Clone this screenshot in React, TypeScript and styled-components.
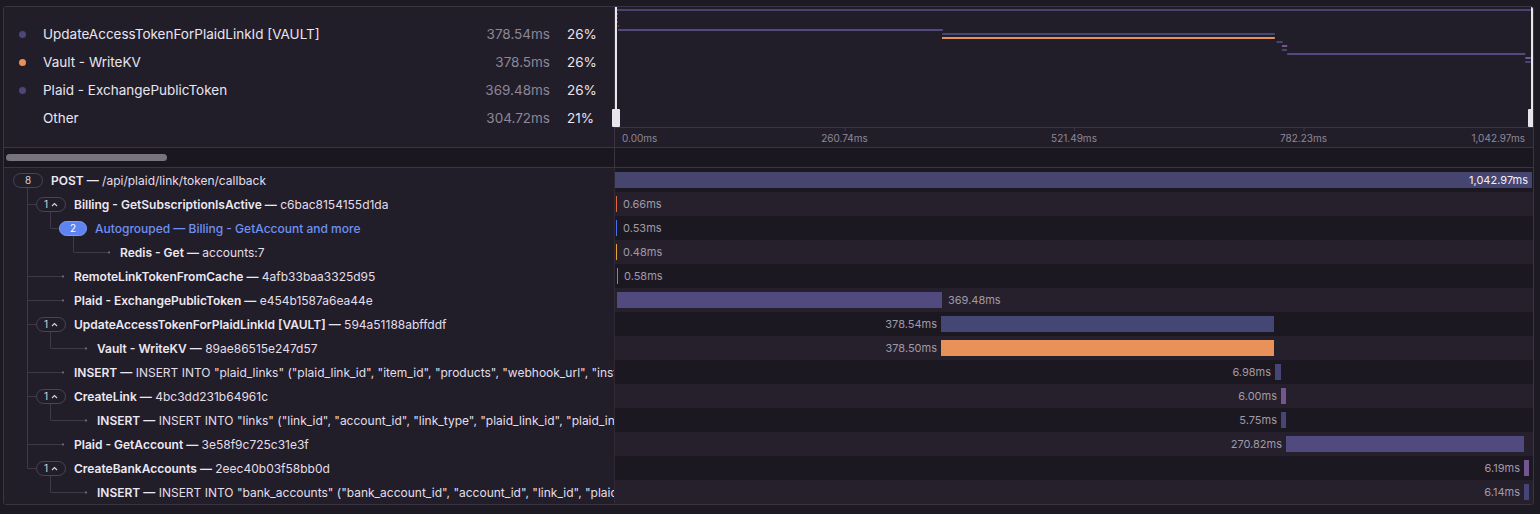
import React from 'react'
import styled, { createGlobalStyle } from 'styled-components'

const TOTAL = 1042.97
const TRACK = 917

const GlobalStyle = createGlobalStyle`
  body {
    margin: 0;
    background: #1d1a23;
    font-family: Inter, "Noto Sans", sans-serif;
    color: #ece8f3;
  }
`

type Span = {
  label: string
  desc?: string
  depth: number
  start: number
  dur: number
  color: string
  count?: number
  chevron?: boolean
  auto?: boolean
}

const spans: Span[] = [
  { label: 'POST', desc: '/api/plaid/link/token/callback', depth: 0, start: 0, dur: 1042.97, color: '#46456f', count: 8 },
  { label: 'Billing - GetSubscriptionIsActive', desc: 'c6bac8154155d1da', depth: 1, start: 1.1, dur: 0.66, color: '#e2673f', count: 1, chevron: true },
  { label: 'Autogrouped — Billing - GetAccount and more', depth: 2, start: 1.1, dur: 0.53, color: '#4d6ff0', count: 2, auto: true },
  { label: 'Redis - Get', desc: 'accounts:7', depth: 3, start: 1.1, dur: 0.48, color: '#e9a23b' },
  { label: 'RemoteLinkTokenFromCache', desc: '4afb33baa3325d95', depth: 1, start: 2.2, dur: 0.58, color: '#e2673f' },
  { label: 'Plaid - ExchangePublicToken', desc: 'e454b1587a6ea44e', depth: 1, start: 2.3, dur: 369.48, color: '#514a7e' },
  { label: 'UpdateAccessTokenForPlaidLinkId [VAULT]', desc: '594a51188abffddf', depth: 1, start: 370.8, dur: 378.54, color: '#444673', count: 1, chevron: true },
  { label: 'Vault - WriteKV', desc: '89ae86515e247d57', depth: 2, start: 370.8, dur: 378.5, color: '#e8925a' },
  { label: 'INSERT', desc: 'INSERT INTO "plaid_links" ("plaid_link_id", "item_id", "products", "webhook_url", "institution_id", "status")', depth: 1, start: 751.2, dur: 6.98, color: '#454576' },
  { label: 'CreateLink', desc: '4bc3dd231b64961c', depth: 1, start: 757.4, dur: 6.0, color: '#74568f', count: 1, chevron: true },
  { label: 'INSERT', desc: 'INSERT INTO "links" ("link_id", "account_id", "link_type", "plaid_link_id", "plaid_institution_id")', depth: 2, start: 757.4, dur: 5.75, color: '#454576' },
  { label: 'Plaid - GetAccount', desc: '3e58f9c725c31e3f', depth: 1, start: 763.4, dur: 270.82, color: '#514a7e' },
  { label: 'CreateBankAccounts', desc: '2eec40b03f58bb0d', depth: 1, start: 1034.2, dur: 6.19, color: '#74568f', count: 1, chevron: true },
  { label: 'INSERT', desc: 'INSERT INTO "bank_accounts" ("bank_account_id", "account_id", "link_id", "plaid_account_id")', depth: 2, start: 1034.2, dur: 6.14, color: '#454576' },
]

const legend = [
  { name: 'UpdateAccessTokenForPlaidLinkId [VAULT]', time: '378.54ms', pct: '26%', dot: '#4c4779' },
  { name: 'Vault - WriteKV', time: '378.5ms', pct: '26%', dot: '#e8925a' },
  { name: 'Plaid - ExchangePublicToken', time: '369.48ms', pct: '26%', dot: '#4c4779' },
  { name: 'Other', time: '304.72ms', pct: '21%' },
]

const ticks = ['0.00ms', '260.74ms', '521.49ms', '782.23ms', '1,042.97ms']

const px = (ms: number) => (ms / TOTAL) * TRACK

// does the vertical guide at `level` keep going below row i
const continues = (i: number, level: number) => {
  for (let j = i + 1; j < spans.length; j++) {
    if (spans[j].depth < level + 1) return false
    if (spans[j].depth === level + 1) return true
  }
  return false
}

const Panel = styled.div`
  margin: 6px 0 0 3px;
  width: 1529px;
  border: 1px solid #3a3443;
  border-radius: 3px;
  overflow: hidden;
`

const Split = styled.div`
  display: grid;
  grid-template-columns: 611px 1fr;
`

const Top = styled(Split)`
  height: 140px;
  background: #221e29;
  border-bottom: 1px solid #3a3443;
`

const Legend = styled.ul`
  list-style: none;
  margin: 0;
  padding: 13px 19px 0 15px;
  border-right: 1px solid #3a3443;
`

const LegendItem = styled.li`
  display: grid;
  grid-template-columns: 7px 1fr auto 28px;
  align-items: center;
  column-gap: 17px;
  height: 28px;
  font-size: 13.5px;
`

const Dot = styled.span<{ $color?: string }>`
  width: 7px;
  height: 7px;
  border-radius: 50%;
  background: ${(p) => p.$color || 'transparent'};
`

const LegendName = styled.span`
  color: #e9e5ef;
`

const LegendTime = styled.span`
  color: #8d8797;
  text-align: right;
`

const LegendPct = styled.span`
  color: #e9e5ef;
  white-space: nowrap;
`

const Minimap = styled.div`
  display: grid;
  grid-template-rows: 120px 1fr;
`

const MapCanvas = styled.div`
  position: relative;
`

const Handle = styled.div<{ $side: 'left' | 'right' }>`
  position: absolute;
  top: 0;
  bottom: 0;
  ${(p) => (p.$side === 'left' ? 'left: 0;' : 'right: 0;')}
  width: 2px;
  background: #e8e6ec;

  &::after {
    content: '';
    position: absolute;
    bottom: 0;
    ${(p) => (p.$side === 'left' ? 'left: -3px;' : 'right: -3px;')}
    width: 8px;
    height: 18px;
    border-radius: 1px;
    background: #e8e6ec;
  }
`

const Axis = styled.div`
  position: relative;
  border-top: 1px solid #3a3443;
  font-size: 10px;
  color: #8e8898;
`

const Tick = styled.span<{ $align: 'start' | 'center' | 'end' }>`
  position: absolute;
  top: 4px;
  line-height: 12px;
  transform: ${(p) =>
    p.$align === 'center' ? 'translateX(-50%)' : p.$align === 'end' ? 'translateX(-100%)' : 'none'};

  &::before {
    content: '';
    display: ${(p) => (p.$align === 'center' ? 'block' : 'none')};
    position: absolute;
    left: 50%;
    top: -5px;
    width: 1px;
    height: 4px;
    background: #3f3949;
  }
`

const ScrollRow = styled(Split)`
  height: 19px;
  background: #1b1720;
  border-bottom: 1px solid #3a3443;
`

const ScrollTrack = styled.div`
  display: flex;
  align-items: center;
  padding-left: 2px;
  border-right: 1px solid #3a3443;
`

const Thumb = styled.div`
  width: 161px;
  height: 7px;
  border-radius: 4px;
  background: #78737f;
`

const Row = styled(Split)`
  height: 24px;
`

const TreeCell = styled.div`
  position: relative;
  background: #221e29;
  border-right: 1px solid #2e2935;
  overflow: hidden;
`

const Guides = styled.svg`
  position: absolute;
  left: 0;
  top: 0;
`

const Node = styled.div<{ $depth: number }>`
  position: relative;
  display: flex;
  align-items: center;
  gap: 8px;
  height: 24px;
  padding-left: ${(p) => 9 + p.$depth * 23}px;
  white-space: nowrap;
  font-size: 12px;
`

const Badge = styled.span<{ $auto?: boolean; $empty?: boolean }>`
  flex: none;
  display: inline-flex;
  align-items: center;
  justify-content: center;
  gap: 3px;
  box-sizing: border-box;
  width: ${(p) => (p.$auto ? '28px' : '30px')};
  height: 15px;
  border-radius: 8px;
  border: 1px solid ${(p) => (p.$auto ? '#7e9cf6' : '#4a4356')};
  background: ${(p) => (p.$auto ? '#5d84f0' : '#221e29')};
  visibility: ${(p) => (p.$empty ? 'hidden' : 'visible')};
  color: ${(p) => (p.$auto ? '#ffffff' : '#d8d3de')};
  font-size: 10px;
  line-height: 1;
`

const Name = styled.span<{ $auto?: boolean }>`
  font-weight: ${(p) => (p.$auto ? 500 : 600)};
  color: ${(p) => (p.$auto ? '#6f91f3' : '#ece8f3')};
`

const Desc = styled.span`
  color: #e3dfe9;
`

const TimeCell = styled.div<{ $odd: boolean }>`
  position: relative;
  background: ${(p) => (p.$odd ? '#25202c' : '#1c1822')};
`

const Bar = styled.div`
  position: absolute;
  top: 4px;
  height: 16px;
`

const Duration = styled.span<{ $inside?: boolean }>`
  position: absolute;
  top: 0;
  line-height: 24px;
  font-size: 11px;
  color: ${(p) => (p.$inside ? '#f2eff6' : '#a09aa9')};
`

const Chevron = () => (
  <svg width="7" height="5" viewBox="0 0 7 5">
    <polyline points="1,4 3.5,1.5 6,4" fill="none" stroke="#d8d3de" strokeWidth="1.1" />
  </svg>
)

const TreeGuides: React.FC<{ index: number }> = ({ index }) => {
  const span = spans[index]
  const d = span.depth
  const lx = (l: number) => 23.5 + l * 23
  const parts: React.ReactNode[] = []
  for (let l = 0; l < d - 1; l++) {
    if (continues(index, l)) parts.push(<line key={`v${l}`} x1={lx(l)} x2={lx(l)} y1={0} y2={24} />)
  }
  if (d > 0) {
    const l = d - 1
    parts.push(<line key="e" x1={lx(l)} x2={lx(l)} y1={0} y2={continues(index, l) ? 24 : 12} />)
    const end = span.count ? 9 + d * 23 : 9 + d * 23 + 28
    parts.push(<line key="h" x1={lx(l)} x2={end} y1={12.5} y2={12.5} />)
    if (!span.count) parts.push(<rect key="dot" x={end - 2} y={11.5} width={2} height={2} fill="#6a6374" stroke="none" />)
  }
  const next = spans[index + 1]
  if (next && next.depth === d + 1) {
    parts.push(<line key="down" x1={lx(d)} x2={lx(d)} y1={19.5} y2={24} />)
  }
  return (
    <Guides width={140} height={24} stroke="#3f3949" strokeWidth={1}>
      {parts}
    </Guides>
  )
}

const TimelineBar: React.FC<{ span: Span; index: number }> = ({ span, index }) => {
  const left = Math.round(px(span.start))
  const width = Math.max(1, Math.round(px(span.dur)))
  const text = index === 0 ? '1,042.97ms' : `${span.dur.toFixed(2)}ms`
  const after = span.start + span.dur < TOTAL / 2
  return (
    <TimeCell $odd={index % 2 === 1}>
      <Bar style={{ left, width, background: span.color }} />
      {index === 0 ? (
        <Duration $inside style={{ right: 918 - (left + width) + 4 }}>{text}</Duration>
      ) : after ? (
        <Duration style={{ left: left + width + 6 }}>{text}</Duration>
      ) : (
        <Duration style={{ right: 918 - left + 4 }}>{text}</Duration>
      )}
    </TimeCell>
  )
}

const App: React.FC = () => {
  return (
    <>
      <GlobalStyle />
      <Panel>
        <Top>
          <Legend>
            {legend.map((item) => (
              <LegendItem key={item.name}>
                <Dot $color={item.dot} />
                <LegendName>{item.name}</LegendName>
                <LegendTime>{item.time}</LegendTime>
                <LegendPct>{item.pct}</LegendPct>
              </LegendItem>
            ))}
          </Legend>
          <Minimap>
            <MapCanvas>
              <svg width={918} height={120}>
                {spans.map((s, i) => (
                  <rect
                    key={i}
                    x={1 + px(s.start)}
                    y={2 + i * 4}
                    width={Math.max(0.4, px(s.dur))}
                    height={2}
                    fill={s.color}
                  />
                ))}
              </svg>
              <Handle $side="left" />
              <Handle $side="right" />
            </MapCanvas>
            <Axis>
              {ticks.map((t, i) => (
                <Tick
                  key={t}
                  $align={i === 0 ? 'start' : i === ticks.length - 1 ? 'end' : 'center'}
                  style={{ left: i === 0 ? 7 : i === ticks.length - 1 ? 910 : (918 * i) / 4 }}
                >
                  {t}
                </Tick>
              ))}
            </Axis>
          </Minimap>
        </Top>
        <ScrollRow>
          <ScrollTrack>
            <Thumb />
          </ScrollTrack>
          <div />
        </ScrollRow>
        {spans.map((s, i) => (
          <Row key={i}>
            <TreeCell>
              <TreeGuides index={i} />
              <Node $depth={s.depth}>
                <Badge $auto={s.auto} $empty={!s.count}>
                  {s.count}
                  {s.chevron && <Chevron />}
                </Badge>
                {s.auto ? (
                  <Name $auto>{s.label}</Name>
                ) : (
                  <span>
                    <Name>{s.label} —</Name> <Desc>{s.desc}</Desc>
                  </span>
                )}
              </Node>
            </TreeCell>
            <TimelineBar span={s} index={i} />
          </Row>
        ))}
      </Panel>
    </>
  )
}

export default App
